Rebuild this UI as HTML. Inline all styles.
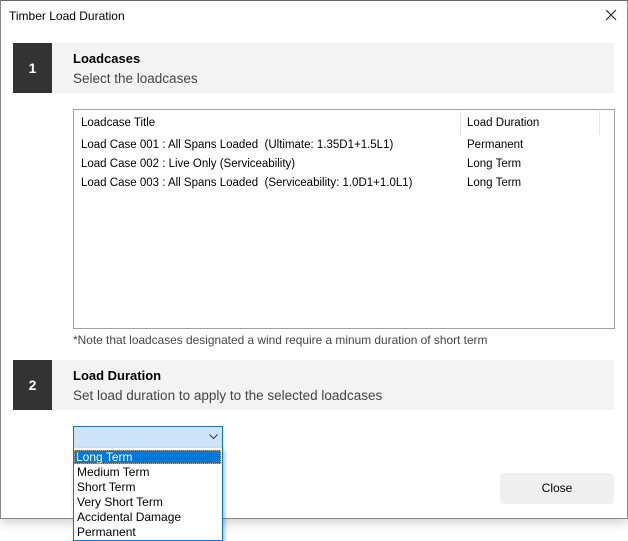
<!DOCTYPE html><html><head><style>
body{margin:0;width:628px;height:541px;background:#fff;font-family:"Liberation Sans",sans-serif;position:relative;overflow:hidden;font-size:12px;color:#000}
.a{position:absolute}
.win{left:0;top:0;width:626px;height:517px;border:1px solid #8a8a8a;border-top-color:#6a6a6a;background:#fff;box-shadow:0 4px 10px rgba(0,0,0,.18)}
.num{background:#333;color:#fff;font-weight:bold;font-size:14px;text-align:center;line-height:50px;width:39px;height:50px}
.pan{background:#f3f3f3;height:50px}
.h{font-weight:bold;font-size:13px}
.s{font-size:13.5px;color:#444}
.r{font-size:11.5px}
.li{left:75px;width:146px;height:15px;line-height:15px;font-size:12px;padding-left:2px}
</style></head><body>
<div class="a win"></div>
<div class="a" style="left:9px;top:9px;font-size:12px">Timber Load Duration</div>
<svg class="a" style="left:605px;top:9px" width="12" height="12"><path d="M1 1L11 11M11 1L1 11" stroke="#222" stroke-width="1.1"/></svg>
<div class="a num" style="left:13px;top:43px">1</div>
<div class="a pan" style="left:52px;top:43px;width:562px"></div>
<div class="a h" style="left:73px;top:51px">Loadcases</div>
<div class="a s" style="left:73px;top:71px">Select the loadcases</div>
<div class="a" style="left:73px;top:109px;width:540px;height:218px;border:1px solid #a0a0a0"></div>
<div class="a" style="left:460px;top:111px;width:1px;height:24px;background:#e5e5e5"></div>
<div class="a" style="left:599px;top:111px;width:1px;height:24px;background:#e5e5e5"></div>
<div class="a r" style="left:81px;top:117px">Loadcase Title</div>
<div class="a r" style="left:467px;top:117px">Load Duration</div>
<div class="a r" style="left:81px;top:139px">Load Case 001 : All Spans Loaded&nbsp; (Ultimate: 1.35D1+1.5L1)</div>
<div class="a r" style="left:81px;top:158px">Load Case 002 : Live Only (Serviceability)</div>
<div class="a r" style="left:81px;top:177px">Load Case 003 : All Spans Loaded&nbsp; (Serviceability: 1.0D1+1.0L1)</div>
<div class="a r" style="left:467px;top:139px">Permanent</div>
<div class="a r" style="left:467px;top:158px">Long Term</div>
<div class="a r" style="left:467px;top:177px">Long Term</div>
<div class="a" style="left:73px;top:333px;font-size:11.9px;color:#444">*Note that loadcases designated a wind require a minum duration of short term</div>
<div class="a num" style="left:13px;top:360px">2</div>
<div class="a pan" style="left:52px;top:360px;width:562px"></div>
<div class="a h" style="left:73px;top:368px">Load Duration</div>
<div class="a s" style="left:73px;top:388px">Set load duration to apply to the selected loadcases</div>
<div class="a" style="left:73px;top:426px;width:148px;height:21px;border:1px solid #0078d7;background:#cce4f7"></div>
<svg class="a" style="left:209px;top:434px" width="9" height="6"><path d="M0.5 0.5L4.5 4.5L8.5 0.5" stroke="#333" fill="none"/></svg>
<div class="a" style="left:73px;top:448px;width:148px;height:92px;border:1px solid #0078d7;border-top:none;background:#fff;box-shadow:2px 2px 4px rgba(0,0,0,.25)"></div>
<div class="a li" style="left:74px;top:450px;width:145px;height:14px;background:#0078d7;color:#fff;outline:1px dotted #f0a040;outline-offset:-1px">Long Term</div>
<div class="a li" style="top:465px">Medium Term</div>
<div class="a li" style="top:480px">Short Term</div>
<div class="a li" style="top:495px">Very Short Term</div>
<div class="a li" style="top:510px">Accidental Damage</div>
<div class="a li" style="top:525px">Permanent</div>
<div class="a" style="left:500px;top:473px;width:114px;height:31px;background:#f0f0f0;border-radius:4px;text-align:center;line-height:31px">Close</div>
</body></html>
